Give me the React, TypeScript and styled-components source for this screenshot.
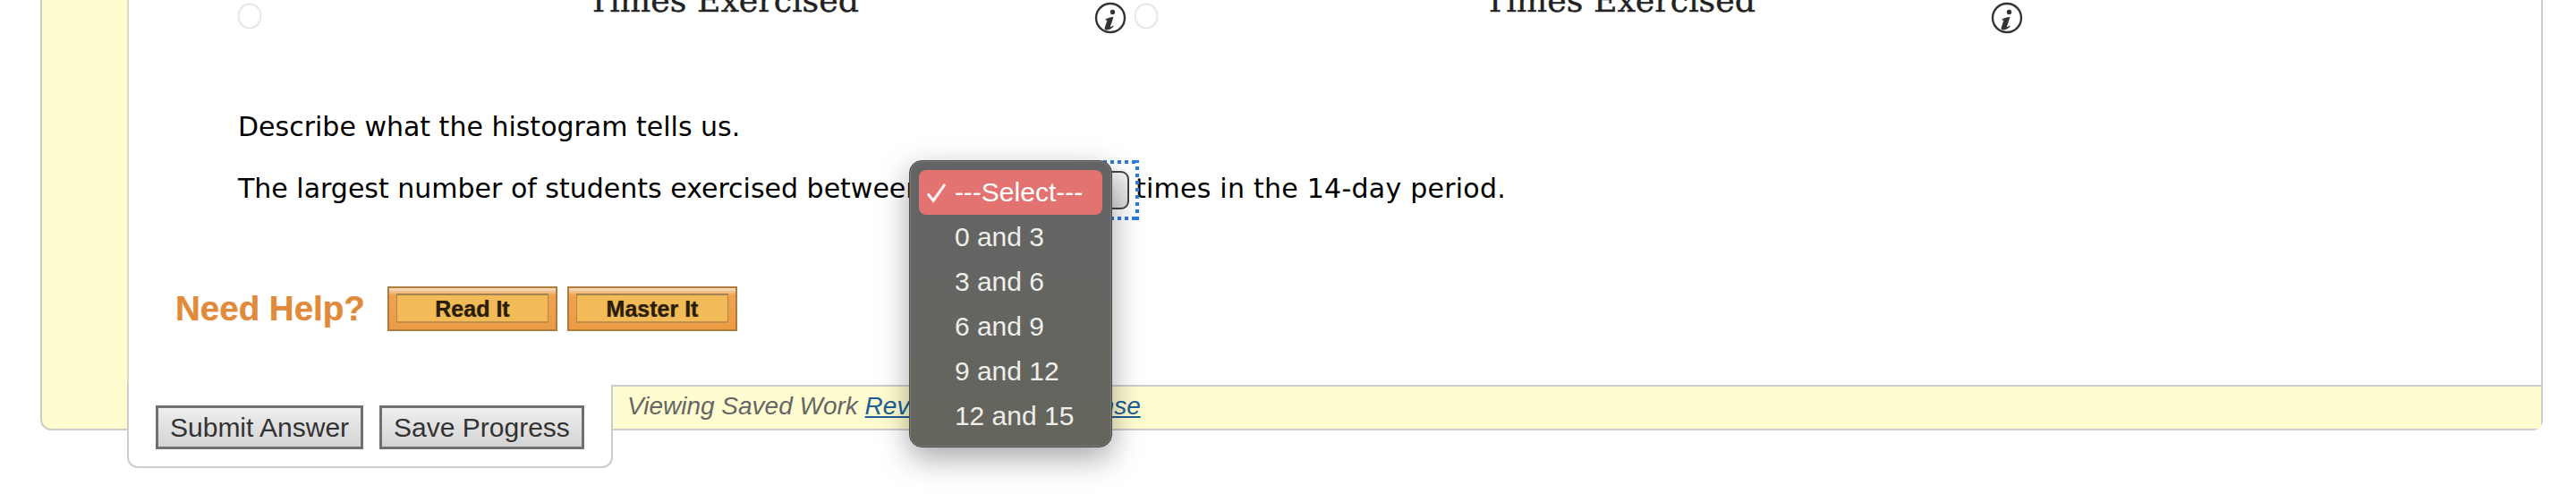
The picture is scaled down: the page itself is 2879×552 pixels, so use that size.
import React from 'react';
import styled, {createGlobalStyle} from 'styled-components';

const options = ['0 and 3', '3 and 6', '6 and 9', '9 and 12', '12 and 15'];

const InfoIcon = () => (
    <InfoSvg viewBox='0 0 36 36'>
        <circle cx='18' cy='18' r='16' fill='none' stroke='#333' strokeWidth='2.400' />
        <circle cx='20.500' cy='11.500' r='2.700' fill='#333' />
        <path
            d='M12.500 19.500c1.500-1 5-2.300 9-2.500L18 27.500c-.3 1 .8 1 3-1l.8 1c-2.500 2.800-5.500 4-8 4-2 0-2.600-1.200-2-3l2.500-7.500c.2-.8-.8-.6-1.800-.2z'
            fill='#333'
        />
    </InfoSvg>
);

const CheckIcon = () => (
    <CheckSvg viewBox='0 0 24 24'>
        <path d='M2 13l6.500 8L22 2' fill='none' stroke='#fff6f5' strokeWidth='3.200' />
    </CheckSvg>
);

const Choice = () => (
    <ChoiceCell>
        <Radio />
        <AxisTitle>Times Exercised</AxisTitle>
        <InfoIcon />
    </ChoiceCell>
);

const App = () => {
    return (
        <Page>
            <GlobalStyle />
            <Panel>
                <Content>
                    <Main>
                        <ChoiceRow>
                            <Choice />
                            <Choice />
                        </ChoiceRow>
                        <Question>Describe what the histogram tells us.</Question>
                        <Answer>
                            The largest number of students exercised between{' '}
                            <FocusRing>
                                <SelectBox />
                                <Menu>
                                    <MenuItem $selected>
                                        <CheckIcon />
                                        ---Select---
                                    </MenuItem>
                                    {options.map(option => (
                                        <MenuItem key={option}>{option}</MenuItem>
                                    ))}
                                </Menu>
                            </FocusRing>
                            <Trailing>times in the 14-day period.</Trailing>
                        </Answer>
                        <HelpRow>
                            <HelpLabel>Need Help?</HelpLabel>
                            <HelpButton>
                                <HelpFace>Read It</HelpFace>
                            </HelpButton>
                            <HelpButton>
                                <HelpFace>Master It</HelpFace>
                            </HelpButton>
                        </HelpRow>
                    </Main>
                    <Footer>
                        <ActionTab>
                            <ActionButton>Submit Answer</ActionButton>
                            <ActionButton>Save Progress</ActionButton>
                        </ActionTab>
                        <Notice>
                            Viewing Saved Work <NoticeLink href='#'>Revert to Last Response</NoticeLink>
                        </Notice>
                    </Footer>
                </Content>
            </Panel>
        </Page>
    );
};

export default App;

const GlobalStyle = createGlobalStyle`
    html, body {
        margin: 0;
        padding: 0;
        background: #fff;
    }
`;

const Page = styled.div`
    width: 2879px;
    height: 552px;
    overflow: hidden;
    background: #fff;
    box-sizing: border-box;
    padding: 0 37px 0 45px;
`;

const Panel = styled.div`
    height: 481px;
    background: #fffdd0;
    border: 2px solid #cccccc;
    border-top: none;
    border-radius: 0 0 12px 12px;
    box-sizing: border-box;
    padding-left: 95px;
`;

const Content = styled.div`
    height: 100%;
    display: flex;
    flex-direction: column;
    background: #fff;
`;

const Main = styled.div`
    flex: 1;
    border-left: 2px solid #d9d9c4;
    padding-left: 122px;
    box-sizing: border-box;
`;

const ChoiceRow = styled.div`
    display: flex;
    gap: 9px;
    padding-top: 2px;
    height: 36px;
`;

const ChoiceCell = styled.div`
    display: flex;
    align-items: flex-start;
    width: 993px;
`;

const Radio = styled.div`
    width: 26px;
    height: 28px;
    margin-top: 2px;
    border-radius: 50%;
    background: #fff;
    box-shadow: inset 0 0 3px #b4b4b4, 0 0 1px #d0d0d0;
    flex: none;
`;

const AxisTitle = styled.div`
    flex: 1;
    margin-top: -28px;
    padding-left: 365px;
    font-family: 'DejaVu Serif', serif;
    font-size: 36.300px;
    line-height: 54px;
    color: #222;
    white-space: nowrap;
    -webkit-text-stroke: 0.4px #222;
`;

const InfoSvg = styled.svg`
    width: 36px;
    height: 36px;
    flex: none;
`;

const Question = styled.div`
    margin-top: 84px;
    font-family: 'DejaVu Sans', sans-serif;
    font-size: 30px;
    line-height: 40px;
    color: #000;
`;

const Answer = styled.div`
    margin-top: 29px;
    font-family: 'DejaVu Sans', sans-serif;
    font-size: 30px;
    line-height: 40px;
    color: #000;
    white-space: nowrap;
`;

const Trailing = styled.span`
    margin-left: -4px;
    letter-spacing: 0.25px;
`;

const FocusRing = styled.span`
    position: relative;
    display: inline-block;
    vertical-align: middle;
    width: 232px;
    height: 67px;
    margin: -14px 0;
    background:
        repeating-linear-gradient(90deg, #2a7ae2 0 4px, transparent 4px 8px) top / 100% 4px no-repeat,
        repeating-linear-gradient(90deg, #2a7ae2 0 4px, transparent 4px 8px) bottom / 100% 4px no-repeat,
        repeating-linear-gradient(0deg, #2a7ae2 0 4px, transparent 4px 8px) right / 4px 100% no-repeat;
`;

const SelectBox = styled.div`
    position: absolute;
    top: 12px;
    left: 0;
    right: 11px;
    height: 43px;
    box-sizing: border-box;
    border: 2px solid #444;
    border-radius: 9px;
    background: linear-gradient(#f6f6f6, #dcdcdc);
`;

const Menu = styled.div`
    position: absolute;
    top: 0;
    left: -25px;
    width: 227px;
    height: 321px;
    box-sizing: border-box;
    padding: 10px;
    border: 1px solid #4a4a4a;
    border-radius: 14px;
    background: linear-gradient(#646466, #65655d);
    box-shadow: 0 12px 34px rgba(0, 0, 0, 0.35), inset 0 0 0 1px #7d7d7d;
    z-index: 2;
`;

const MenuItem = styled.div<{$selected?: boolean}>`
    position: relative;
    height: 50px;
    padding-left: 40px;
    border-radius: 8px;
    font-family: 'Liberation Sans', Arial, sans-serif;
    font-size: 30px;
    line-height: 50px;
    color: ${props => (props.$selected ? '#fff' : '#eeeeea')};
    background: ${props => (props.$selected ? '#e37370' : 'transparent')};
`;

const CheckSvg = styled.svg`
    position: absolute;
    left: 8px;
    top: 14px;
    width: 23px;
    height: 23px;
`;

const HelpRow = styled.div`
    display: flex;
    align-items: center;
    margin: 88px 0 0 -70px;
`;

const HelpLabel = styled.div`
    width: 237px;
    font-family: 'Liberation Sans', Arial, sans-serif;
    font-size: 38.500px;
    font-weight: 700;
    color: #e08a3c;
    text-shadow: 0 0 1px rgba(224, 138, 60, 0.6);
`;

const HelpButton = styled.div`
    box-sizing: border-box;
    width: 190px;
    margin-right: 11px;
    padding: 6px 8px 7px;
    background: linear-gradient(#f7e2c8 0, #f0a24f 8px, #ec9b45 100%);
    border: 2px solid #b07c3c;
`;

const HelpFace = styled.div`
    height: 33px;
    box-sizing: border-box;
    background: #f2bb58;
    border: 1px solid #b08a50;
    border-top: 2px solid #a08456;
    border-bottom: 2px solid #c09048;
    font-family: 'Liberation Sans', Arial, sans-serif;
    font-size: 25px;
    font-weight: 700;
    line-height: 31px;
    color: #2a1e08;
    text-align: center;
    text-shadow: 0 0 1px rgba(60, 40, 10, 0.7);
`;

const Footer = styled.div`
    display: flex;
    height: 49px;
`;

const ActionTab = styled.div`
    flex: none;
    width: 543px;
    height: 93px;
    display: flex;
    gap: 18px;
    padding: 23px 0 0 30px;
    box-sizing: border-box;
    background: #fff;
    border: 2px solid #cccccc;
    border-top: none;
    border-radius: 0 0 12px 12px;
    position: relative;
`;

const ActionButton = styled.div`
    height: 49px;
    padding: 0 13px;
    box-sizing: border-box;
    border: 3px solid #707070;
    background: linear-gradient(#eeeeee, #d4d4d4);
    font-family: 'Liberation Sans', Arial, sans-serif;
    font-size: 30px;
    line-height: 43px;
    color: #333;
    white-space: nowrap;
`;

const Notice = styled.div`
    flex: 1;
    box-sizing: border-box;
    border-top: 2px solid #cccccc;
    padding-left: 16px;
    font-family: 'Liberation Sans', Arial, sans-serif;
    font-size: 28px;
    font-style: italic;
    line-height: 44px;
    color: #666;
    background: #fffdd0;
`;

const NoticeLink = styled.a`
    color: #1d5f96;
    text-decoration: underline;
`;
